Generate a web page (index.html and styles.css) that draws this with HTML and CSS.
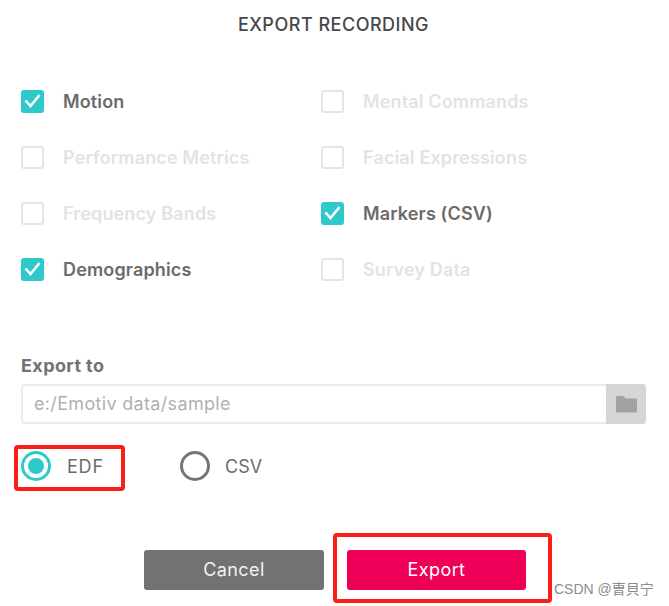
FILE: index.html
```html
<!DOCTYPE html>
<html lang="en">
<head>
<meta charset="utf-8">
<title>Export Recording</title>
<link rel="stylesheet" href="styles.css">
</head>
<body>
<main class="dialog">
  <h1 class="title">EXPORT RECORDING</h1>
  <section class="options">
    <div class="option"><span class="box checked"><svg viewBox="0 0 23 23"><path d="M4.500 10.500l5 5.500 9-11"/></svg></span><span class="label">Motion</span></div>
    <div class="option off"><span class="box"></span><span class="label">Mental Commands</span></div>
    <div class="option off"><span class="box"></span><span class="label">Performance Metrics</span></div>
    <div class="option off"><span class="box"></span><span class="label">Facial Expressions</span></div>
    <div class="option off"><span class="box"></span><span class="label">Frequency Bands</span></div>
    <div class="option"><span class="box checked"><svg viewBox="0 0 23 23"><path d="M4.500 10.500l5 5.500 9-11"/></svg></span><span class="label">Markers (CSV)</span></div>
    <div class="option"><span class="box checked"><svg viewBox="0 0 23 23"><path d="M4.500 10.500l5 5.500 9-11"/></svg></span><span class="label">Demographics</span></div>
    <div class="option off"><span class="box"></span><span class="label">Survey Data</span></div>
  </section>
  <div class="export-label">Export to</div>
  <div class="path">
    <span class="path-text">e:/Emotiv data/sample</span>
    <span class="browse"><svg viewBox="0 0 21 17" width="21" height="17"><path d="M0 1.500a1.500 1.500 0 0 1 1.500-1.500h6l2 2.500h10a1.500 1.500 0 0 1 1.500 1.500v11.500a1 1 0 0 1-1 1h-19a1 1 0 0 1-1-1z"/></svg></span>
  </div>
  <div class="formats">
    <div class="format edf"><span class="radio on"></span><span class="format-name">EDF</span><span class="mark mark-edf"></span></div>
    <div class="format"><span class="radio"></span><span>CSV</span></div>
  </div>
  <div class="actions">
    <button class="btn cancel">Cancel</button>
    <button class="btn export">Export<span class="mark mark-export"></span></button>
  </div>
</main>
<div class="watermark">CSDN @曺貝宁</div>
</body>
</html>
```
FILE: styles.css
```css
* { box-sizing: border-box; }
html, body { margin: 0; height: 100%; background: #fff; overflow: hidden; }
body { position: relative; font-family: "Inter", "Open Sans", sans-serif; color: #6e6a68; }
.dialog { padding: 15px 23px 0 21px; }
.title { margin: 0; height: 20px; line-height: 20px; text-align: center; font-size: 18px; font-weight: 500; letter-spacing: 0.5px; color: #48484a; }
.options { margin-top: 55px; display: grid; grid-template-columns: 300px 1fr; grid-auto-rows: 23px; row-gap: 33px; }
.option { display: flex; align-items: center; gap: 19px; font-size: 18px; font-weight: 600; letter-spacing: 0.15px; }
.option.off { color: #e4e2e2; }
.box { width: 23px; height: 23px; border: 2px solid #e5e5e5; border-radius: 3px; flex: none; }
.box.checked { background: #2fc9cb; border: 0; }
.box svg { display: block; width: 23px; height: 23px; fill: none; stroke: #fff; stroke-width: 2.600; }
.export-label { margin-top: 75px; height: 20px; line-height: 20px; font-size: 18px; font-weight: 700; letter-spacing: 0.4px; color: #757170; }
.path { margin-top: 8px; height: 40px; display: flex; border-radius: 3px; overflow: hidden; }
.path-text { flex: 1; line-height: 36px; padding-left: 11px; font-size: 18px; letter-spacing: 0.33px; color: #b3b0ae; border: 2px solid #ebebeb; border-right: 0; border-radius: 3px 0 0 3px; }
.browse { width: 40px; background: #d6d6d6; display: flex; align-items: center; justify-content: center; }
.browse svg { fill: #a2a2a2; }
.formats { margin-top: 27px; display: flex; height: 30px; }
.format { position: relative; display: flex; align-items: center; gap: 15px; font-size: 18px; color: #6e6a68; width: 159px; padding-bottom: 0; }
.format.edf { gap: 16px; }
.format-name { letter-spacing: 0.8px; }
.radio { width: 30px; height: 30px; border: 3px solid #757575; border-radius: 50%; flex: none; display: flex; align-items: center; justify-content: center; }
.radio.on { border-color: #2fc9cb; }
.radio.on::after { content: ""; width: 16px; height: 16px; background: #2fc9cb; border-radius: 50%; }
.mark { position: absolute; border: 4px solid #fa1e14; border-radius: 4px; pointer-events: none; }
.mark-edf { left: -7px; top: -6px; width: 111px; height: 46px; }
.mark-export { left: -14px; top: -17px; width: 219px; height: 70px; }
.actions { margin-top: 69px; margin-left: 123px; display: flex; gap: 23px; }
.btn { position: relative; width: 180px; height: 40px; border: 0; border-radius: 3px; font: 400 18px "Inter", "Open Sans", sans-serif; letter-spacing: 0.4px; color: #fff; padding: 0 0 2px; }
.cancel { background: #727272; color: #f2f2f2; }
.export { background: #ee0059; width: 179px; }
.watermark { position: absolute; left: 554px; top: 581px; font: 14px/16px "Liberation Sans", "Noto Sans CJK SC", sans-serif; color: #8c8c8c; }
```
